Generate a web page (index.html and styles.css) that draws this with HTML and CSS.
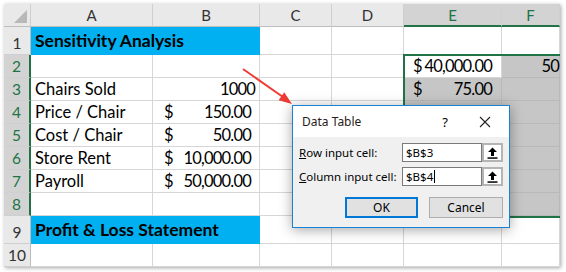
FILE: index.html
```html
<!DOCTYPE html>
<html>
<head>
<meta charset="utf-8">
<link rel="stylesheet" href="styles.css">
</head>
<body>
<div class="sheet">
  <div class="grid">
    <div class="hd corner"><span class="tri"></span></div>
    <div class="hd">A</div>
    <div class="hd">B</div>
    <div class="hd">C</div>
    <div class="hd">D</div>
    <div class="hd sel">E</div>
    <div class="hd sel">F</div>

    <div class="rh">1</div>
    <div class="c title span2">Sensitivity Analysis</div>
    <div class="c"></div><div class="c"></div><div class="c"></div><div class="c"></div>

    <div class="rh sel">2</div>
    <div class="c"></div><div class="c"></div><div class="c"></div><div class="c"></div>
    <div class="c acct wide"><span>$</span><span class="n">40,000.00</span></div>
    <div class="c g num edge"><span class="n">50</span></div>

    <div class="rh sel">3</div>
    <div class="c">Chairs Sold</div>
    <div class="c num"><span class="n">1000</span></div>
    <div class="c"></div><div class="c"></div>
    <div class="c g acct wide"><span>$</span><span class="n">75.00</span></div>
    <div class="c g"></div>

    <div class="rh sel">4</div>
    <div class="c">Price / Chair</div>
    <div class="c acct"><span>$</span><span class="n">150.00</span></div>
    <div class="c"></div><div class="c"></div><div class="c g"></div><div class="c g"></div>

    <div class="rh sel">5</div>
    <div class="c">Cost / Chair</div>
    <div class="c acct"><span>$</span><span class="n">50.00</span></div>
    <div class="c"></div><div class="c"></div><div class="c g"></div><div class="c g"></div>

    <div class="rh sel">6</div>
    <div class="c">Store Rent</div>
    <div class="c acct"><span>$</span><span class="n">10,000.00</span></div>
    <div class="c"></div><div class="c"></div><div class="c g"></div><div class="c g"></div>

    <div class="rh sel">7</div>
    <div class="c">Payroll</div>
    <div class="c acct"><span>$</span><span class="n">50,000.00</span></div>
    <div class="c"></div><div class="c"></div><div class="c g"></div><div class="c g"></div>

    <div class="rh sel">8</div>
    <div class="c"></div><div class="c"></div><div class="c"></div><div class="c"></div><div class="c g"></div><div class="c g"></div>

    <div class="rh">9</div>
    <div class="c title span2">Profit &amp; Loss Statement</div>
    <div class="c"></div><div class="c"></div><div class="c"></div><div class="c"></div>

    <div class="rh">10</div>
    <div class="c"></div><div class="c"></div><div class="c"></div><div class="c"></div><div class="c"></div><div class="c"></div>
  </div>
  <div class="selbox"></div>
</div>

<svg class="arrow" width="566" height="272" viewBox="0 0 566 272">
  <line x1="243" y1="69" x2="283" y2="97" stroke="#ee3b35" stroke-width="2"/>
  <polygon points="292,104 278.6,100.2 284.2,92.2" fill="#ee3b35"/>
</svg>

<div class="dialog">
  <div class="dtitle">
    <span class="dname">Data Table</span>
    <span class="help">?</span>
    <svg class="close" width="12" height="12" viewBox="0 0 12 12"><path d="M1 1 L11 11 M11 1 L1 11" stroke="#222" stroke-width="1.1"/></svg>
  </div>
  <div class="dbody">
    <div class="frow">
      <span class="flabel"><u>R</u>ow input cell:</span>
      <span class="field"><span class="ftext">$B$3</span></span>
      <span class="pick"><svg width="11" height="12" viewBox="0 0 11 12"><path d="M5.5 0.5 L10 5 L7 5 L7 9 L4 9 L4 5 L1 5 Z" fill="#000"/><rect x="0.5" y="10.3" width="10" height="1.5" fill="#000"/></svg></span>
    </div>
    <div class="frow">
      <span class="flabel"><u>C</u>olumn input cell:</span>
      <span class="field"><span class="ftext">$B$4</span><span class="caret"></span></span>
      <span class="pick"><svg width="11" height="12" viewBox="0 0 11 12"><path d="M5.5 0.5 L10 5 L7 5 L7 9 L4 9 L4 5 L1 5 Z" fill="#000"/><rect x="0.5" y="10.3" width="10" height="1.5" fill="#000"/></svg></span>
    </div>
    <div class="btns">
      <span class="btn ok">OK</span>
      <span class="btn">Cancel</span>
    </div>
  </div>
</div>
</body>
</html>
```

FILE: styles.css
```css
* { box-sizing: border-box; }
html, body { margin: 0; padding: 0; background: #fff; }
body { width: 566px; height: 272px; position: relative; overflow: hidden; font-family: "Lato", "Liberation Sans", sans-serif; }

.sheet {
  position: relative;
  margin: 4px 0 0 4px;
  width: 556px;
  height: 263px;
  overflow: hidden;
  box-shadow: 1px 1px 4px rgba(0,0,0,0.35);
}
.grid {
  display: grid;
  grid-template-columns: 27px 122px 107px 72px 72px 98px 58px;
  grid-template-rows: 23px 28px 23px 23px 23px 23px 23px 23px 23px 28px 23px;
}
.hd {
  background: #e9e9e9;
  border-right: 1px solid #cfcfcf;
  border-bottom: 1px solid #bdbdbd;
  color: #333;
  font-size: 15px;
  display: flex;
  align-items: flex-end;
  justify-content: center;
  padding-bottom: 2px;
}
.hd.sel { background: #d3d3d3; color: #217346; border-bottom: 2px solid #217346; padding-bottom: 1px; }
.corner { position: relative; }
.tri {
  position: absolute; right: 3px; bottom: 3px; width: 13px; height: 13px;
  background: #b8b8b8; clip-path: polygon(100% 0, 100% 100%, 0 100%);
}
.rh {
  background: #e9e9e9;
  border-right: 1px solid #bdbdbd;
  border-bottom: 1px solid #cfcfcf;
  color: #333;
  font-size: 15.5px;
  display: flex;
  align-items: flex-end;
  justify-content: center;
  padding-bottom: 2px;
  line-height: 17px;
}
.rh.sel { background: #d3d3d3; color: #217346; border-right: 2px solid #217346; }
.c {
  border-right: 1px solid #d6d6d6;
  border-bottom: 1px solid #d6d6d6;
  font-size: 16.5px;
  color: #000;
  display: flex;
  align-items: flex-end;
  padding: 0 4px 2px 4px;
  line-height: 18px;
  white-space: nowrap;
  background: #fff;
}
.c.g { background: #c6c6c6; border-color: #b9b9b9; }
.n { letter-spacing: -0.8px; }
.title {
  grid-column: span 2;
  background: #00b0f0;
  border-color: #00b0f0;
  font-weight: bold;
  font-size: 17.5px;
  padding-bottom: 4px;
}
.num { justify-content: flex-end; }
.edge { padding-right: 0; }
.acct { justify-content: space-between; padding-left: 11px; padding-right: 8px; }
.acct.wide { padding-left: 9px; padding-right: 9px; }

.selbox {
  position: absolute;
  left: 399px; top: 50px;
  width: 200px; height: 164px;
  border: 2px solid #217346;
  pointer-events: none;
}

.arrow { position: absolute; left: 0; top: 0; }

.dialog {
  position: absolute;
  left: 292px; top: 105px;
  width: 218px; height: 123px;
  border: 1px solid #1a82d4;
  background: #f0f0f0;
  box-shadow: 0 2px 12px rgba(0,0,0,0.35);
  font-family: "Noto Sans", "Open Sans", sans-serif;
  font-size: 11.5px;
  color: #000;
  display: flex;
  flex-direction: column;
}
.dtitle {
  height: 31px;
  background: #fff;
  display: flex;
  align-items: center;
  padding-left: 9px;
}
.dname { flex: 1; font-size: 12px; color: #2a1a1a; }
.help { font-size: 13px; margin-right: 31px; }
.close { margin-right: 18px; }
.dbody { padding: 6px 6px 0 6px; display: flex; flex-direction: column; }
.frow { display: flex; align-items: center; height: 19px; margin-bottom: 5px; }
.flabel { width: 103px; white-space: nowrap; }
.field {
  width: 80px; height: 19px; background: #fff; border: 1px solid #7a7a7a;
  display: flex; align-items: center; padding-left: 3px;
}
.ftext { font-size: 11.5px; }
.caret { width: 1px; height: 13px; background: #000; margin-left: 1px; }
.pick {
  width: 21px; height: 19px; background: #fff; border: 2px solid #b4b4b4;
  display: flex; align-items: center; justify-content: center;
}
.btns { display: flex; justify-content: flex-end; margin-top: 6px; padding-right: 0; }
.btn {
  width: 74px; height: 21px; background: #e1e1e1; border: 1px solid #adadad;
  display: flex; align-items: center; justify-content: center; font-size: 12px;
}
.btn.ok { width: 73px; border: 2px solid #0078d7; margin-right: 11px; }
```
